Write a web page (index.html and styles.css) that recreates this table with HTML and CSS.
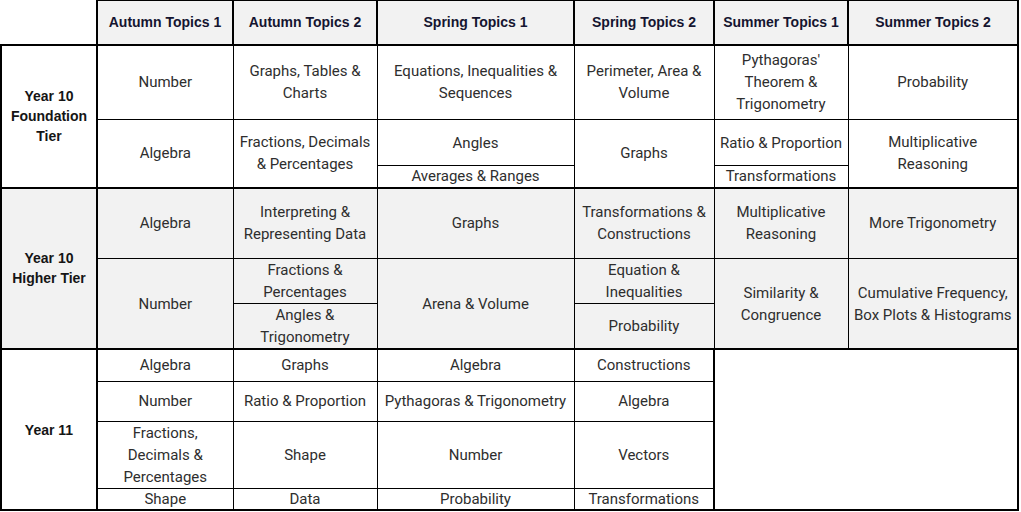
FILE: index.html
```html
<!DOCTYPE html>
<html lang="en">
<head>
<meta charset="utf-8">
<title>Maths Curriculum Plan</title>
<link rel="stylesheet" href="styles.css">
</head>
<body>
<table class="plan">
  <colgroup>
    <col class="c-label">
    <col class="c-a1">
    <col class="c-a2">
    <col class="c-s1">
    <col class="c-s2">
    <col class="c-u1">
    <col class="c-u2">
  </colgroup>
  <thead>
    <tr class="r-head">
      <th class="corner"></th>
      <th class="head">Autumn Topics 1</th>
      <th class="head">Autumn Topics 2</th>
      <th class="head">Spring Topics 1</th>
      <th class="head">Spring Topics 2</th>
      <th class="head">Summer Topics 1</th>
      <th class="head">Summer Topics 2</th>
    </tr>
  </thead>
  <tbody class="group">
    <tr class="r-f1">
      <td class="label" rowspan="3">Year 10<br>Foundation<br>Tier</td>
      <td>Number</td>
      <td>Graphs, Tables &amp;<br>Charts</td>
      <td>Equations, Inequalities &amp;<br>Sequences</td>
      <td>Perimeter, Area &amp;<br>Volume</td>
      <td>Pythagoras'<br>Theorem &amp;<br>Trigonometry</td>
      <td>Probability</td>
    </tr>
    <tr class="r-f2">
      <td rowspan="2">Algebra</td>
      <td rowspan="2">Fractions, Decimals<br>&amp; Percentages</td>
      <td>Angles</td>
      <td rowspan="2">Graphs</td>
      <td>Ratio &amp; Proportion</td>
      <td rowspan="2">Multiplicative<br>Reasoning</td>
    </tr>
    <tr class="r-f3 slim">
      <td>Averages &amp; Ranges</td>
      <td>Transformations</td>
    </tr>
  </tbody>
  <tbody class="group higher">
    <tr class="r-h1">
      <td class="label" rowspan="3">Year 10<br>Higher Tier</td>
      <td>Algebra</td>
      <td>Interpreting &amp;<br>Representing Data</td>
      <td>Graphs</td>
      <td>Transformations &amp;<br>Constructions</td>
      <td>Multiplicative<br>Reasoning</td>
      <td>More Trigonometry</td>
    </tr>
    <tr class="r-h2">
      <td rowspan="2">Number</td>
      <td>Fractions &amp;<br>Percentages</td>
      <td rowspan="2">Arena &amp; Volume</td>
      <td>Equation &amp;<br>Inequalities</td>
      <td rowspan="2">Similarity &amp;<br>Congruence</td>
      <td rowspan="2">Cumulative Frequency,<br>Box Plots &amp; Histograms</td>
    </tr>
    <tr class="r-h3">
      <td>Angles &amp;<br>Trigonometry</td>
      <td>Probability</td>
    </tr>
  </tbody>
  <tbody class="group">
    <tr class="r-y1">
      <td class="label" rowspan="4">Year 11</td>
      <td>Algebra</td>
      <td>Graphs</td>
      <td>Algebra</td>
      <td>Constructions</td>
      <td class="blank" colspan="2" rowspan="4"></td>
    </tr>
    <tr class="r-y2">
      <td>Number</td>
      <td>Ratio &amp; Proportion</td>
      <td>Pythagoras &amp; Trigonometry</td>
      <td>Algebra</td>
    </tr>
    <tr class="r-y3">
      <td>Fractions,<br>Decimals &amp;<br>Percentages</td>
      <td>Shape</td>
      <td>Number</td>
      <td>Vectors</td>
    </tr>
    <tr class="r-y4 slim">
      <td>Shape</td>
      <td>Data</td>
      <td>Probability</td>
      <td>Transformations</td>
    </tr>
  </tbody>
</table>
</body>
</html>
```

FILE: styles.css
```css
html, body {
  margin: 0;
  padding: 0;
  background: #ffffff;
}

.plan {
  border-collapse: collapse;
  table-layout: fixed;
  width: 1018px;
  font-family: Roboto, "Liberation Sans", sans-serif;
  font-size: 15px;
  color: #2e2e2e;
}

.c-label { width: 96px; }
.c-a1 { width: 136px; }
.c-a2 { width: 144px; }
.c-s1 { width: 197px; }
.c-s2 { width: 140px; }
.c-u1 { width: 134px; }
.c-u2 { width: 170px; }

.plan td {
  border: 1px solid #000;
  padding: 0 2px;
  text-align: center;
  vertical-align: middle;
  line-height: 22px;
  white-space: nowrap;
}

.plan .slim td {
  line-height: 20px;
}

.plan th {
  padding: 0 2px;
  text-align: center;
  vertical-align: middle;
  white-space: nowrap;
}

.head {
  border: 2px solid #000;
  border-top-width: 1px;
  background: #f2f2f2;
  font-family: "Liberation Sans", Arial, sans-serif;
  font-weight: bold;
  font-size: 14px;
  color: #151530;
}

.corner {
  border: 0;
  border-bottom: 2px solid #000;
  border-right: 2px solid #000;
  background: #fff;
}

.group {
  border: 2px solid #000;
}

.plan td.label {
  border: 2px solid #000;
  font-family: "Liberation Sans", Arial, sans-serif;
  font-weight: bold;
  font-size: 14px;
  line-height: 20px;
  color: #151515;
}

.higher td {
  background: #f2f2f2;
}

.plan td.blank {
  border-left: 2px solid #000;
  background: #fff;
}

.r-head { height: 44px; }
.r-f1 { height: 75px; }
.r-f2 { height: 46px; }
.r-f3 { height: 22px; }
.r-h1 { height: 71px; }
.r-h2 { height: 44px; }
.r-h3 { height: 43px; }
.r-y1 { height: 32px; }
.r-y2 { height: 40px; }
.r-y3 { height: 66px; }
.r-y4 { height: 22px; }
```
